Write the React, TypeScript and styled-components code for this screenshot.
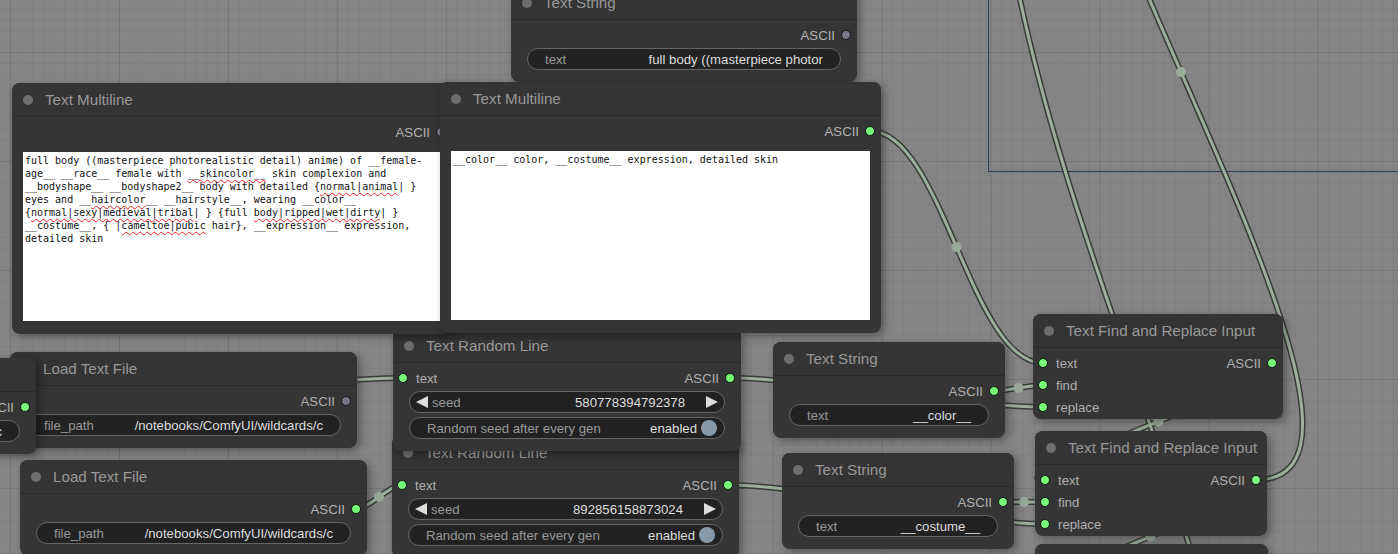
import React from 'react'
import styled, { createGlobalStyle } from 'styled-components'

const GlobalStyle = createGlobalStyle`
  html, body {
    margin: 0;
    padding: 0;
    background: #858585;
    overflow: hidden;
  }
  body {
    font-family: "Liberation Sans", Arial, sans-serif;
  }
`

// the litegraph canvas with its two grids
const Canvas = styled.div`
  position: relative;
  width: 1398px;
  height: 554px;
  overflow: hidden;
  background-color: #858585;
  background-image:
    linear-gradient(to right, rgba(0, 0, 0, 0.07) 1px, transparent 1px),
    linear-gradient(to bottom, rgba(0, 0, 0, 0.07) 1px, transparent 1px),
    linear-gradient(to right, rgba(0, 0, 0, 0.04) 1px, transparent 1px),
    linear-gradient(to bottom, rgba(0, 0, 0, 0.04) 1px, transparent 1px);
  background-size: 109px 109px, 109px 109px, 10.9px 10.9px, 10.9px 10.9px;
  background-position: 10px 0, 0 52px, 10px 0, 0 52px;
  font-family: "Liberation Sans", Arial, sans-serif;
`

const GroupFrame = styled.div<{ $x: number; $y: number; $w: number; $h: number }>`
  position: absolute;
  left: ${p => p.$x}px;
  top: ${p => p.$y}px;
  width: ${p => p.$w}px;
  height: ${p => p.$h}px;
  border: 1px solid #2c3a5c;
`

const LinkLayer = styled.svg`
  position: absolute;
  left: 0;
  top: 0;
  width: 1398px;
  height: 554px;
  overflow: visible;
`

// node frame, placed on the canvas
const NodeBox = styled.div<{ $x: number; $y: number; $w: number }>`
  position: absolute;
  left: ${p => p.$x}px;
  top: ${p => p.$y}px;
  width: ${p => p.$w}px;
  display: flex;
  flex-direction: column;
  background: #353535;
  border-radius: 8px;
  box-shadow: 3px 3px 8px rgba(0, 0, 0, 0.35);
`

const NodeTitle = styled.div`
  display: flex;
  align-items: center;
  gap: 12px;
  height: 33px;
  flex: none;
  padding-left: 11px;
  background: #343434;
  border-bottom: 1px solid #2b2b2b;
  border-radius: 8px 8px 0 0;
  color: #999;
  font-size: 15.2px;
  white-space: nowrap;
  overflow: hidden;
`

const TitleDot = styled.span`
  width: 10px;
  height: 10px;
  flex: none;
  border-radius: 50%;
  background: #6e6e6e;
`

const NodeBody = styled.div<{ $pb: number }>`
  display: flex;
  flex-direction: column;
  padding: 4px 0 ${p => p.$pb}px;
`

const SlotRow = styled.div`
  display: flex;
  align-items: center;
  justify-content: space-between;
  height: 22px;
  padding: 0 6px 0 5px;
  font-size: 13.2px;
  color: #b0b0b0;
  white-space: nowrap;
`

const SlotIn = styled.span`
  display: flex;
  align-items: center;
  gap: 8px;
`

const SlotOut = styled.span`
  display: flex;
  align-items: center;
  gap: 6px;
`

const Dot = styled.span<{ $on: boolean }>`
  width: 10px;
  height: 10px;
  flex: none;
  box-sizing: border-box;
  border-radius: 50%;
  border: 1px solid #141414;
  background: ${p => (p.$on ? '#7f7' : '#778')};
`

const WidgetStack = styled.div`
  display: flex;
  flex-direction: column;
  gap: 4px;
  margin-top: 2px;
  padding: 0 16px;
`

const Widget = styled.div`
  display: flex;
  align-items: center;
  justify-content: space-between;
  height: 22px;
  box-sizing: border-box;
  padding: 0 17px;
  border: 1px solid #666;
  border-radius: 11px;
  background: #222;
  font-size: 13.2px;
  white-space: nowrap;
  overflow: hidden;
`

const NumberWidget = styled(Widget)`
  justify-content: flex-start;
  padding: 0 6px;
`

const ToggleWidget = styled(Widget)`
  justify-content: flex-start;
  padding: 0 7px 0 17px;
`

const Label = styled.span<{ $gap?: number }>`
  color: #999;
  margin-left: ${p => p.$gap || 0}px;
`

const Value = styled.span<{ $push?: boolean }>`
  color: #ddd;
  ${p => (p.$push ? 'margin-left: auto;' : '')}
`

const Arrow = styled.span<{ $dir: 'left' | 'right' }>`
  width: 0;
  height: 0;
  flex: none;
  border-top: 6px solid transparent;
  border-bottom: 6px solid transparent;
  ${p => (p.$dir === 'left' ? 'border-right: 12px solid #ddd;' : 'border-left: 12px solid #ddd; margin-left: 21px;')}
`

const Knob = styled.span`
  width: 16px;
  height: 16px;
  flex: none;
  margin-left: 4px;
  border-radius: 50%;
  background: #89a;
`

const TextArea = styled.div`
  margin: 9px 11px 0;
  height: 169px;
  box-sizing: border-box;
  padding: 2px;
  background: #fff;
  color: #111;
  font-family: "DejaVu Sans Mono", "Liberation Mono", monospace;
  font-size: 10px;
  line-height: 13px;
  white-space: pre-wrap;
  overflow-wrap: break-word;
  overflow: hidden;
`

const Misspelt = styled.span`
  text-decoration: underline wavy #e22;
  text-decoration-thickness: 1px;
  text-underline-offset: 2px;
`

type NodeProps = {
  x: number
  y: number
  w: number
  title: string
  pb?: number
  children?: React.ReactNode
}

const Node = ({ x, y, w, title, pb = 12, children }: NodeProps) => (
  <NodeBox $x={x} $y={y} $w={w}>
    <NodeTitle>
      <TitleDot />
      <span>{title}</span>
    </NodeTitle>
    <NodeBody $pb={pb}>{children}</NodeBody>
  </NodeBox>
)

type Slot = [string, boolean]

const Row = ({ input, output }: { input?: Slot; output?: Slot }) => (
  <SlotRow>
    {input ? (
      <SlotIn>
        <Dot $on={input[1]} />
        {input[0]}
      </SlotIn>
    ) : (
      <span />
    )}
    {output ? (
      <SlotOut>
        {output[0]}
        <Dot $on={output[1]} />
      </SlotOut>
    ) : (
      <span />
    )}
  </SlotRow>
)

const TextWidget = ({ label, value }: { label: string; value: string }) => (
  <Widget>
    <Label>{label}</Label>
    <Value>{value}</Value>
  </Widget>
)

const SeedWidgets = ({ seed }: { seed: string }) => (
  <WidgetStack>
    <NumberWidget>
      <Arrow $dir="left" />
      <Label $gap={4}>seed</Label>
      <Value $push>{seed}</Value>
      <Arrow $dir="right" />
    </NumberWidget>
    <ToggleWidget>
      <Label>Random seed after every gen</Label>
      <Value $push>enabled</Value>
      <Knob />
    </ToggleWidget>
  </WidgetStack>
)

const LoadTextFile = ({ x, y, on }: { x: number; y: number; on: boolean }) => (
  <Node x={x} y={y} w={347} title="Load Text File">
    <Row output={['ASCII', on]} />
    <WidgetStack>
      <TextWidget label="file_path" value="/notebooks/ComfyUI/wildcards/c" />
    </WidgetStack>
  </Node>
)

const TextString = ({ x, y, w, value, on }: { x: number; y: number; w: number; value: string; on: boolean }) => (
  <Node x={x} y={y} w={w} title="Text String">
    <Row output={['ASCII', on]} />
    <WidgetStack>
      <TextWidget label="text" value={value} />
    </WidgetStack>
  </Node>
)

const FindReplace = ({ x, y, w }: { x: number; y: number; w: number }) => (
  <Node x={x} y={y} w={w} title="Text Find and Replace Input" pb={1}>
    <Row input={['text', true]} output={['ASCII', true]} />
    <Row input={['find', true]} />
    <Row input={['replace', true]} />
  </Node>
)

// links: [x1, y1, x2, y2], output -> input
const links: number[][] = [
  [870, 131, 1043, 363],
  [25, 407, 403, 378],
  [356, 509, 402, 485],
  [730, 378, 1043, 407],
  [728, 485, 1045, 524],
  [994, 391, 1043, 385],
  [1003, 502, 1045, 502],
  [1272, 363, 1045, 480],
  [1256, 480, 1106, -336],
  [1256, 480, 1045, 593],
]

const linkPath = ([x1, y1, x2, y2]: number[]) => {
  const d = Math.hypot(x2 - x1, y2 - y1) * 0.25
  return `M${x1},${y1} C${x1 + d},${y1} ${x2 - d},${y2} ${x2},${y2}`
}

const Links = () => {
  const paths = links.map(linkPath)
  paths.push('M1016,-20 C1060,200 1150,400 1205,600')
  return (
    <LinkLayer viewBox="0 0 1398 554">
      {paths.map((d, i) => (
        <path key={'b' + i} d={d} fill="none" stroke="#2e2e2e" strokeOpacity={0.85} strokeWidth={6} />
      ))}
      {paths.map((d, i) => (
        <path key={'l' + i} d={d} fill="none" stroke="#9cb09c" strokeWidth={3} />
      ))}
      {links.map(([x1, y1, x2, y2], i) => (
        <circle key={'m' + i} cx={(x1 + x2) / 2} cy={(y1 + y2) / 2} r={5} fill="#9aaa9a" />
      ))}
    </LinkLayer>
  )
}

export default function App() {
  return (
    <>
      <GlobalStyle />
      <Canvas>
        <GroupFrame $x={988} $y={-10} $w={430} $h={180} />
        <Links />

        <Node x={392} y={436} w={347} title="Text Random Line">
          <Row input={['text', true]} output={['ASCII', true]} />
          <SeedWidgets seed="892856158873024" />
        </Node>
        <Node x={393} y={329} w={348} title="Text Random Line">
          <Row input={['text', true]} output={['ASCII', true]} />
          <SeedWidgets seed="580778394792378" />
        </Node>

        <TextString x={773} y={342} w={232} value="__color__" on />
        <TextString x={782} y={453} w={232} value="__costume__" on />

        <FindReplace x={1035} y={544} w={233} />
        <FindReplace x={1035} y={431} w={232} />
        <FindReplace x={1033} y={314} w={250} />

        <LoadTextFile x={10} y={352} on={false} />
        <LoadTextFile x={-311} y={358} on />
        <LoadTextFile x={20} y={460} on />

        <TextString x={511} y={-14} w={346} value="full body ((masterpiece photor" on={false} />

        <Node x={12} y={83} w={440} title="Text Multiline" pb={13}>
          <Row output={['ASCII', false]} />
          <TextArea>
            full body ((masterpiece photorealistic detail) anime) of __female-age__ __race__ female with{' '}
            <Misspelt>__skincolor__</Misspelt> skin complexion and __bodyshape__ __bodyshape2__ body with detailed {'{'}
            <Misspelt>normal|animal</Misspelt>| {'}'} eyes and __<Misspelt>haircolor</Misspelt>__ __hairstyle__, wearing
            __color__ {'{'}
            <Misspelt>normal|sexy|medieval|tribal</Misspelt>| {'}'} {'{'}full <Misspelt>body|ripped|wet|dirty</Misspelt>|{' '}
            {'}'} __costume__, {'{'} |<Misspelt>cameltoe|pubic</Misspelt> hair{'}'}, __expression__ expression, detailed
            skin
          </TextArea>
        </Node>
        <Node x={440} y={82} w={441} title="Text Multiline" pb={13}>
          <Row output={['ASCII', true]} />
          <TextArea>__color__ color, __costume__ expression, detailed skin</TextArea>
        </Node>
      </Canvas>
    </>
  )
}
